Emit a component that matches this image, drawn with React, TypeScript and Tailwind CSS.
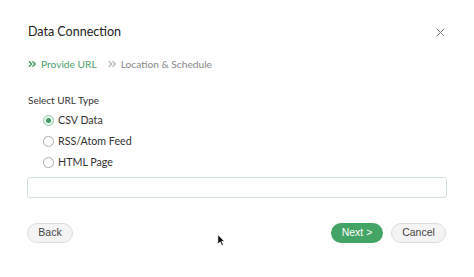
import { useState } from 'react';

const TYPES = ['CSV Data', 'RSS/Atom Feed', 'HTML Page'];

function Chevrons({ className }: { className: string }) {
  return (
    <svg viewBox="0 0 10 8" className={className} fill="none" stroke="currentColor" strokeWidth="1.5">
      <path d="M1 1l3 3-3 3M5 1l3 3-3 3" />
    </svg>
  );
}

function Radio({ checked }: { checked: boolean }) {
  return (
    <span
      className={`flex h-[11px] w-[11px] items-center justify-center rounded-full border ${
        checked ? 'border-[#8fcaa5] bg-[#e9f5ee]' : 'border-[#a9b0ad] bg-white'
      }`}
    >
      {checked && <span className="h-[5px] w-[5px] rounded-full bg-[#3f9c62]" />}
    </span>
  );
}

export default function App() {
  const [type, setType] = useState('CSV Data');
  return (
    <div className="relative h-[277px] w-[474px] bg-white font-['Lato','Noto_Sans',sans-serif] text-[#333]">
      <div className="flex items-center justify-between pl-[28px] pr-[29px] pt-[23px]">
        <h1 className="text-[12.5px] leading-[18px] text-[#222]">Data Connection</h1>
        <svg viewBox="0 0 10 10" className="h-[9px] w-[9px] text-[#777]" stroke="currentColor" strokeWidth="1.1">
          <path d="M1 1l8 8M9 1l-8 8" />
        </svg>
      </div>

      <div className="mt-[15px] flex items-center pl-[28px] text-[10.2px] leading-[16px]">
        <Chevrons className="h-[8px] w-[9px] text-[#3f9c62]" />
        <span className="ml-[4px] text-[#4a9e6a]">Provide URL</span>
        <Chevrons className="ml-[11px] h-[8px] w-[9px] text-[#b8b8b8]" />
        <span className="ml-[4px] text-[#888]">Location &amp; Schedule</span>
      </div>

      <div className="mt-[21px] pl-[28px] text-[10px] leading-[14px] text-[#333]">Select URL Type</div>

      <div className="mt-[6px] flex flex-col gap-[7px] pl-[43px]">
        {TYPES.map((t) => (
          <label key={t} className="flex h-[14px] cursor-pointer items-center gap-[4px] text-[10.7px] text-[#333]" onClick={() => setType(t)}>
            <Radio checked={type === t} />
            <span>{t}</span>
          </label>
        ))}
      </div>

      <div className="mt-[8px] px-[27px]">
        <input className="block h-[21px] w-full rounded-[3px] border border-[#d2e2d9] bg-white px-2 text-[11px] outline-none" />
      </div>

      <div className="mt-[25px] flex items-center pl-[27px] pr-[28px] font-['Liberation_Sans',Arial,sans-serif] text-[10.5px]">
        <button className="h-[20px] w-[46px] rounded-full border border-[#dedede] bg-[#f4f4f4] text-[#444]">Back</button>
        <div className="flex-1" />
        <button className="h-[20px] w-[52px] rounded-full bg-[#44a466] text-white">Next &gt;</button>
        <button className="ml-[8px] h-[20px] w-[55px] rounded-full border border-[#dedede] bg-[#f4f4f4] text-[#444]">Cancel</button>
      </div>

      <svg viewBox="0 0 12 18" className="absolute left-[217px] top-[234px] h-[13px] w-[9px]">
        <path d="M1 1v13l3.2-3 2.3 5 2-1-2.3-4.8H10z" fill="#111" stroke="#fff" strokeWidth="0.8" />
      </svg>
    </div>
  );
}
